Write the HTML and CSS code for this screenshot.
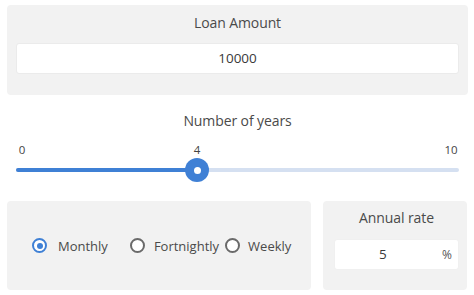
FILE: index.html
```html
<!DOCTYPE html>
<html>
<head>
<meta charset="utf-8">
<link rel="stylesheet" href="styles.css">
</head>
<body>
<div class="page">
  <section class="panel amount">
    <div class="title">Loan Amount</div>
    <div class="field">10000</div>
  </section>

  <section class="years">
    <div class="title">Number of years</div>
    <div class="slider">
      <div class="ticks">
        <span class="tick" style="left:6px">0</span>
        <span class="tick" style="left:181px">4</span>
        <span class="tick" style="left:435px">10</span>
      </div>
      <div class="track">
        <div class="fill" style="width:181px"></div>
        <div class="thumb" style="left:181px"></div>
      </div>
    </div>
  </section>

  <div class="row">
    <section class="panel freq">
      <label class="radio r1"><span class="dot on"></span>Monthly</label>
      <label class="radio r2"><span class="dot"></span>Fortnightly</label>
      <label class="radio r3"><span class="dot"></span>Weekly</label>
    </section>
    <section class="panel rate">
      <div class="title small">Annual rate</div>
      <div class="field rate-field"><span class="val">5</span><span class="pct">%</span></div>
    </section>
  </div>
</div>
</body>
</html>
```

FILE: styles.css
```css
html, body {
  margin: 0;
  padding: 0;
  background: #ffffff;
}
body {
  font-family: "Open Sans", "Noto Sans", sans-serif;
  color: #4a4a4a;
}
.page {
  padding: 5px 6px 0 7px;
  display: flex;
  flex-direction: column;
}
.panel {
  background: #f2f2f2;
  border-radius: 4px;
}
.amount {
  height: 90px;
  box-sizing: border-box;
  padding: 8px 9px 0 9px;
}
.title {
  text-align: center;
  font-size: 14px;
  line-height: 20px;
  letter-spacing: -0.1px;
}
.field {
  margin-top: 10px;
  height: 31px;
  background: #ffffff;
  border: 1px solid #ebebeb;
  box-sizing: border-box;
  border-radius: 3px;
  text-align: center;
  font-size: 13.5px;
  line-height: 29px;
  color: #3a3a3a;
}
.years {
  padding: 16px 9px 0 9px;
  height: 106px;
  box-sizing: border-box;
}
.slider {
  position: relative;
  margin-top: 11px;
}
.ticks {
  position: relative;
  height: 16px;
  font-size: 11.5px;
  line-height: 16px;
  color: #444;
}
.tick {
  position: absolute;
  top: 0;
  transform: translateX(-50%);
}
.track {
  position: relative;
  margin-top: 10px;
  height: 4px;
  border-radius: 2px;
  background: #d5e0f1;
}
.fill {
  height: 4px;
  border-radius: 2px;
  background: #3f80d5;
}
.thumb {
  position: absolute;
  top: 2px;
  width: 24px;
  height: 24px;
  margin-left: -12px;
  margin-top: -12px;
  border-radius: 50%;
  background: #3f80d5;
}
.thumb::after {
  content: "";
  position: absolute;
  left: 8.5px;
  top: 8.5px;
  width: 7px;
  height: 7px;
  border-radius: 50%;
  background: #ffffff;
}
.row {
  display: flex;
  gap: 12px;
  height: 89px;
}
.freq {
  width: 304px;
  display: flex;
  align-items: center;
  justify-content: flex-start;
  padding-left: 25px;
  box-sizing: border-box;
  font-size: 13px;
}
.radio {
  display: flex;
  align-items: center;
}
.r1 { margin-right: 22px; }
.r2 { margin-right: 6px; }
.r1 .dot { margin-right: 11px; }
.r2 .dot { margin-right: 9px; }
.r3 .dot { margin-right: 8px; }
.dot {
  width: 15px;
  height: 15px;
  box-sizing: border-box;
  border: 2px solid #6a6a6a;
  border-radius: 50%;
  background: #fff;
  position: relative;
}
.dot.on {
  border-color: #3f80d5;
}
.dot.on::after {
  content: "";
  position: absolute;
  left: 2.5px;
  top: 2.5px;
  width: 6px;
  height: 6px;
  border-radius: 50%;
  background: #3f80d5;
}
.rate {
  width: 144px;
  box-sizing: border-box;
  padding: 7px 8px 0 11px;
}
.rate .field {
  margin-top: 11px;
  display: flex;
  justify-content: space-between;
  padding: 0 6px 0 44px;
  border-color: #f0f0f0;
}
.pct {
  font-size: 12px;
  color: #555;
}
```
